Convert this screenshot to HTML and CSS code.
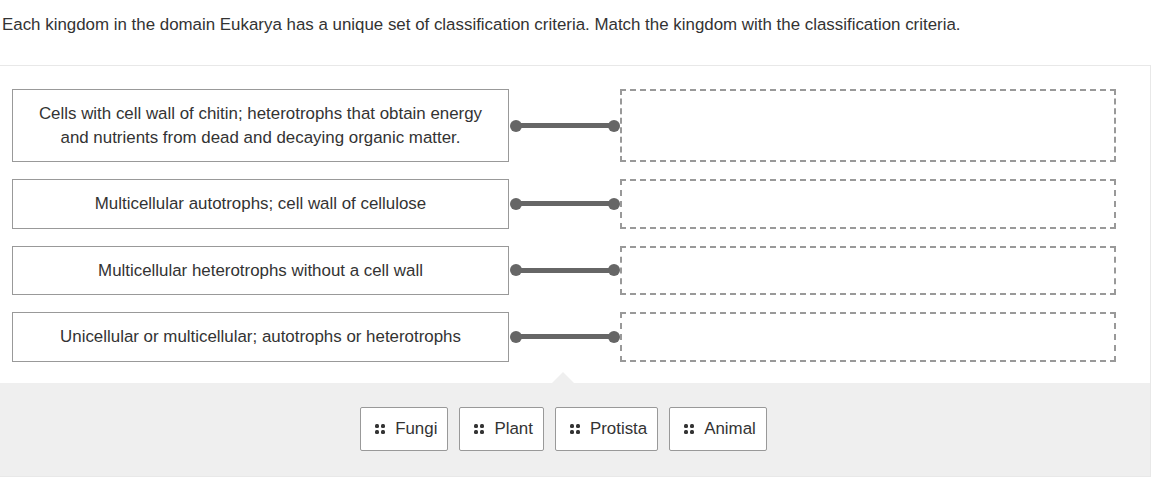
FILE: index.html
```html
<!DOCTYPE html>
<html>
<head>
<meta charset="utf-8">
<link rel="stylesheet" href="styles.css">
</head>
<body>
<p class="prompt">Each kingdom in the domain Eukarya has a unique set of classification criteria. Match the kingdom with the classification criteria.</p>
<div class="question">
  <div class="pairs">
    <div class="row">
      <div class="term">Cells with cell wall of chitin; heterotrophs that obtain energy and nutrients from dead and decaying organic matter.</div>
      <div class="link"><span class="dot"></span><span class="bar"></span><span class="dot"></span></div>
      <div class="slot"></div>
    </div>
    <div class="row">
      <div class="term">Multicellular autotrophs; cell wall of cellulose</div>
      <div class="link"><span class="dot"></span><span class="bar"></span><span class="dot"></span></div>
      <div class="slot"></div>
    </div>
    <div class="row">
      <div class="term">Multicellular heterotrophs without a cell wall</div>
      <div class="link"><span class="dot"></span><span class="bar"></span><span class="dot"></span></div>
      <div class="slot"></div>
    </div>
    <div class="row">
      <div class="term">Unicellular or multicellular; autotrophs or heterotrophs</div>
      <div class="link"><span class="dot"></span><span class="bar"></span><span class="dot"></span></div>
      <div class="slot"></div>
    </div>
  </div>
  <div class="tray">
    <span class="notch"></span>
    <div class="choices">
      <div class="chip"><span class="grip"><i></i><i></i><i></i><i></i></span>Fungi</div>
      <div class="chip"><span class="grip"><i></i><i></i><i></i><i></i></span>Plant</div>
      <div class="chip"><span class="grip"><i></i><i></i><i></i><i></i></span>Protista</div>
      <div class="chip"><span class="grip"><i></i><i></i><i></i><i></i></span>Animal</div>
    </div>
  </div>
</div>
</body>
</html>
```
FILE: styles.css
```css
html, body {
  margin: 0;
  padding: 0;
  background: #fff;
}
body {
  font-family: "Liberation Sans", Arial, sans-serif;
  color: #333;
}
.prompt {
  margin: 0;
  padding: 15px 2px 0;
  height: 65px;
  font-size: 16.9px;
  line-height: 20px;
  box-sizing: border-box;
}
.question {
  width: 1151px;
  box-sizing: border-box;
  border-top: 1px solid #e8e8e8;
  border-right: 1px solid #e8e8e8;
  border-bottom: 1px solid #e8e8e8;
}
.pairs {
  display: flex;
  flex-direction: column;
  gap: 17px;
  padding: 23px 0 21.6px 12px;
}
.row {
  display: flex;
  align-items: center;
}
.term {
  width: 497px;
  min-height: 49.6px;
  box-sizing: border-box;
  border: 1px solid #999;
  padding: 12px 20px 11px;
  font-size: 16.9px;
  line-height: 24px;
  text-align: center;
}
.link {
  width: 111px;
  display: flex;
  align-items: center;
  box-sizing: border-box;
  padding-left: 1px;
}
.dot {
  width: 12px;
  height: 12px;
  border-radius: 50%;
  background: #666;
  flex: none;
}
.bar {
  flex: 1;
  height: 5px;
  background: #666;
  margin: 0 -2px;
}
.slot {
  width: 496px;
  box-sizing: border-box;
  border: 2px dashed #999;
  align-self: stretch;
}
.tray {
  position: relative;
  background: #efefef;
  height: 93px;
  padding-top: 23.4px;
  box-sizing: border-box;
}
.notch {
  position: absolute;
  left: 552px;
  top: -11px;
  width: 0;
  height: 0;
  border-left: 11px solid transparent;
  border-right: 11px solid transparent;
  border-bottom: 11px solid #efefef;
}
.choices {
  width: 1127px;
  display: flex;
  justify-content: center;
  gap: 11px;
}
.chip {
  display: flex;
  align-items: center;
  height: 44px;
  box-sizing: border-box;
  border: 1px solid #999;
  border-radius: 2px;
  background: #fff;
  padding: 0 10px 0 14px;
  font-size: 16.9px;
  color: #333;
}
.grip {
  display: grid;
  grid-template-columns: 4px 4px;
  grid-template-rows: 4px 4px;
  gap: 2px;
  margin-right: 10px;
}
.grip i {
  display: block;
  width: 4px;
  height: 4px;
  border-radius: 1.5px;
  background: #333;
}
```
